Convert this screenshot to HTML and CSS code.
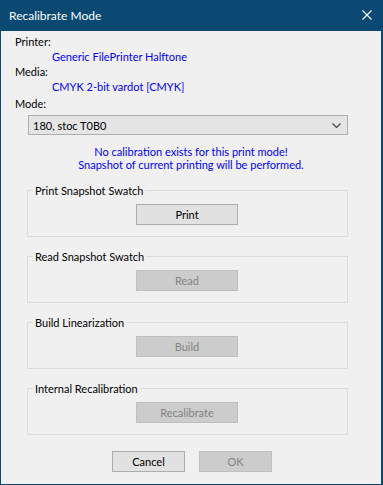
FILE: index.html
```html
<!DOCTYPE html>
<html lang="en">
<head>
    <meta charset="UTF-8">
    <meta name="viewport" content="width=device-width, initial-scale=1.0">
    <title>Recalibrate Mode</title>
    <link rel="stylesheet" href="styles.css">
</head>
<body>
    <div class="window">
        <div class="titlebar">
            <span class="title">Recalibrate Mode</span>
            <svg class="close" width="10" height="10" viewBox="0 0 10 10">
                <path d="M0.5 0.5 L9.5 9.5 M9.5 0.5 L0.5 9.5" stroke="#ffffff" stroke-width="1.1" fill="none"/>
            </svg>
        </div>

        <div class="content">
            <div class="label printer">Printer:</div>
            <div class="value">Generic FilePrinter Halftone</div>
            <div class="label">Media:</div>
            <div class="value">CMYK 2-bit vardot [CMYK]</div>
            <div class="label mode">Mode:</div>

            <div class="combo">
                <span>180, stoc T0B0</span>
                <svg width="9" height="5" viewBox="0 0 9 5">
                    <path d="M0.5 0.5 L4.5 4.5 L8.5 0.5" stroke="#404040" stroke-width="1.1" fill="none"/>
                </svg>
            </div>

            <div class="message">
                No calibration exists for this print mode!<br>
                Snapshot of current printing will be performed.
            </div>

            <fieldset class="group">
                <legend>Print Snapshot Swatch</legend>
                <button type="button">Print</button>
            </fieldset>
            <fieldset class="group">
                <legend>Read Snapshot Swatch</legend>
                <button type="button" disabled>Read</button>
            </fieldset>
            <fieldset class="group">
                <legend>Build Linearization</legend>
                <button type="button" disabled>Build</button>
            </fieldset>
            <fieldset class="group">
                <legend>Internal Recalibration</legend>
                <button type="button" disabled>Recalibrate</button>
            </fieldset>

            <div class="actions">
                <button type="button" class="action">Cancel</button>
                <button type="button" class="action" disabled>OK</button>
            </div>
        </div>
    </div>
</body>
</html>
```

FILE: styles.css
```css
body {
    margin: 0;
    font-family: Lato, "Noto Sans", Arial, sans-serif;
    font-size: 11px;
    color: #000000;
}

.window {
    width: 383px;
    height: 485px;
    box-sizing: border-box;
    background-color: #f0f0f0;
    border-left: 1px solid #0a4a72;
    border-right: 2px solid #0a4a72;
    border-bottom: 1px solid #0a4a72;
}

.titlebar {
    height: 31px;
    background-color: #0a4a72;
    color: #ffffff;
    display: flex;
    align-items: center;
    justify-content: space-between;
    padding: 0 9px 0 8px;
}
.title {
    font-size: 12px;
    line-height: 15px;
    margin-top: -1px;
}
.close {
    display: block;
    margin-top: -1px;
}

.content {
    padding: 0 14px;
}

.label,
.value {
    line-height: 15px;
}
.printer {
    padding-top: 3px;
}
.value {
    padding-left: 37px;
    color: #0000ff;
}
.mode {
    margin-top: 2px;
}

.combo {
    margin: 4px 0 0 13px;
    width: 320px;
    height: 20px;
    box-sizing: border-box;
    border: 1px solid #adadad;
    background-color: #e5e5e5;
    display: flex;
    align-items: center;
    justify-content: space-between;
    padding: 0 4px;
    line-height: 15px;
}
.combo svg {
    margin-right: 2px;
}

.message {
    margin-top: 10px;
    text-align: center;
    line-height: 13px;
    color: #0000ff;
}

.group {
    margin: 12px 0 0 12px;
    width: 321px;
    box-sizing: border-box;
    border: 1px solid #dcdcdc;
    padding: 0 0 11px 5px;
    min-width: 0;
}
.group legend {
    padding: 0 2px;
    line-height: 15px;
}
.group button {
    margin: 6px 0 0 103px;
}

button {
    display: block;
    width: 102px;
    height: 21px;
    padding: 0;
    font-family: Lato, "Noto Sans", Arial, sans-serif;
    font-size: 11px;
    line-height: 15px;
    color: #000000;
    background-color: #e1e1e1;
    border: 1px solid #adadad;
    border-radius: 0;
}
button:disabled {
    color: #838383;
    background-color: #cccccc;
    border-color: #bfbfbf;
}

.actions {
    display: flex;
    justify-content: center;
    gap: 14px;
    margin-top: 16px;
    padding-left: 2px;
}
.action {
    width: 73px;
}
```
